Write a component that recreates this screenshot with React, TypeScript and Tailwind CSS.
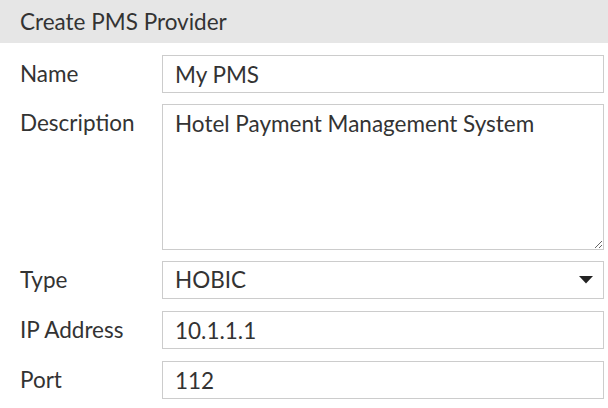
import React from "react";

const font = { fontFamily: "Lato, 'Open Sans', sans-serif" };

function Row({ label, children, className = "" }: { label: string; children: React.ReactNode; className?: string }) {
  return (
    <div className={`flex items-start ${className}`}>
      <div className="w-[162px] shrink-0 h-[38px] flex items-center pl-[20px] text-[22.5px] text-[#333333]">{label}</div>
      <div className="w-[442px]">{children}</div>
    </div>
  );
}

export default function App() {
  return (
    <div className="w-[608px] h-[408px] bg-white overflow-hidden" style={font}>
      <div className="h-[43px] bg-[#e6e6e6] flex items-center pl-[20px] text-[22.5px] text-[#333333]">
        Create PMS Provider
      </div>
      <div className="pt-[12px] flex flex-col">
        <Row label="Name">
          <input
            readOnly
            value="My PMS"
            className="w-full h-[38px] border border-[#cccccc] px-[12px] text-[22.5px] text-[#333333] outline-none"
            style={font}
          />
        </Row>
        <Row label="Description" className="mt-[11px]">
          <textarea
            readOnly
            value="Hotel Payment Management System"
            className="block w-full h-[146px] border border-[#cccccc] px-[12px] py-[6px] text-[22.5px] leading-[26px] text-[#333333] outline-none"
            style={font}
          />
        </Row>
        <Row label="Type" className="mt-[11px]">
          <div className="w-full h-[38px] border border-[#cccccc] pl-[12px] pr-[10px] flex items-center justify-between text-[22.5px] text-[#333333]">
            <span>HOBIC</span>
            <svg width="14" height="8" viewBox="0 0 14 8">
              <path d="M0 0 H14 L7 7.5 Z" fill="#222222" />
            </svg>
          </div>
        </Row>
        <Row label="IP Address" className="mt-[12px]">
          <input
            readOnly
            value="10.1.1.1"
            className="w-full h-[38px] border border-[#cccccc] px-[12px] text-[22.5px] text-[#333333] outline-none"
            style={font}
          />
        </Row>
        <Row label="Port" className="mt-[12px]">
          <input
            readOnly
            value="112"
            className="w-full h-[38px] border border-[#cccccc] px-[12px] text-[22.5px] text-[#333333] outline-none"
            style={font}
          />
        </Row>
      </div>
    </div>
  );
}
